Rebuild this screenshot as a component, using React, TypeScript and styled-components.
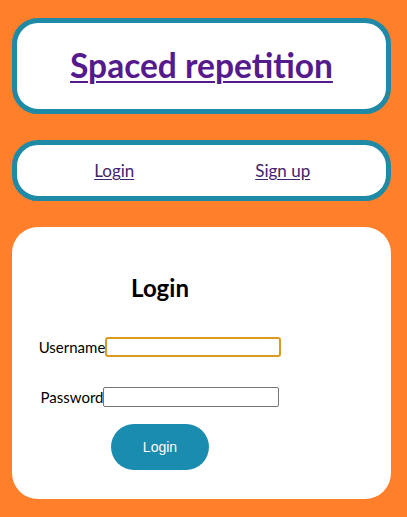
import React from 'react';
import styled, { createGlobalStyle } from 'styled-components';

const GlobalStyle = createGlobalStyle`
  html, body {
    margin: 0;
    padding: 0;
    background: #ff7f2a;
  }
  body {
    font-family: Lato, "Open Sans", sans-serif;
  }
`;

const Page = styled.div`
  display: flex;
  flex-direction: column;
  gap: 26px;
  padding: 18px 16px 20px 12px;
`;

const Panel = styled.div`
  background: #ffffff;
  border: 5px solid #1f8aa6;
  border-radius: 26px;
`;

const Header = styled(Panel)`
  height: 86px;
  display: flex;
  align-items: center;
  justify-content: center;
`;

const Title = styled.a`
  font-size: 33.5px;
  font-weight: 700;
  color: #551a8b;
  text-decoration: underline;
  text-decoration-thickness: 2px;
  text-underline-offset: 3px;
  margin-top: -2px;
`;

const Nav = styled(Panel)`
  height: 51px;
  display: grid;
  grid-template-columns: 1fr 1fr;
  align-items: center;
  padding: 0 19px 0 13px;
`;

const NavLink = styled.a`
  justify-self: center;
  font-size: 17px;
  color: #3f2470;
  text-decoration: underline;
  text-underline-offset: 2px;
`;

const Card = styled.div`
  background: #ffffff;
  border-radius: 26px;
  height: 272px;
  padding-top: 46px;
  box-sizing: border-box;
`;

const Form = styled.form`
  width: 296px;
  display: flex;
  flex-direction: column;
  align-items: center;
`;

const Heading = styled.h2`
  margin: 0;
  font-size: 24px;
  line-height: 29px;
  font-weight: 700;
  color: #000;
`;

const Row = styled.label<{ $gap: number }>`
  display: flex;
  align-items: center;
  margin-top: ${p => p.$gap}px;
  font-size: 15px;
  color: #000;
`;

const Input = styled.input<{ $focused?: boolean }>`
  width: 176px;
  height: 20px;
  box-sizing: border-box;
  margin: 0;
  padding: 1px 2px;
  font-size: 13px;
  border: ${p => (p.$focused ? '2px solid #d99a1e' : '1px solid #767676')};
  border-radius: ${p => (p.$focused ? '3px' : '2px')};
  outline: none;
  background: #fff;
`;

const Button = styled.button`
  margin-top: 17px;
  width: 98px;
  height: 46px;
  border: none;
  border-radius: 23px;
  background: #1a8cb0;
  color: #ffffff;
  font-family: "Liberation Sans", Arial, sans-serif;
  font-size: 14px;
  cursor: pointer;
`;

export default function App() {
  return (
    <>
      <GlobalStyle />
      <Page>
        <Header>
          <Title href="#">Spaced repetition</Title>
        </Header>
        <Nav>
          <NavLink href="#">Login</NavLink>
          <NavLink href="#">Sign up</NavLink>
        </Nav>
        <Card>
          <Form onSubmit={e => e.preventDefault()}>
            <Heading>Login</Heading>
            <Row $gap={35}>
              Username
              <Input type="text" $focused />
            </Row>
            <Row $gap={30}>
              Password
              <Input type="password" />
            </Row>
            <Button type="submit">Login</Button>
          </Form>
        </Card>
      </Page>
    </>
  );
}
